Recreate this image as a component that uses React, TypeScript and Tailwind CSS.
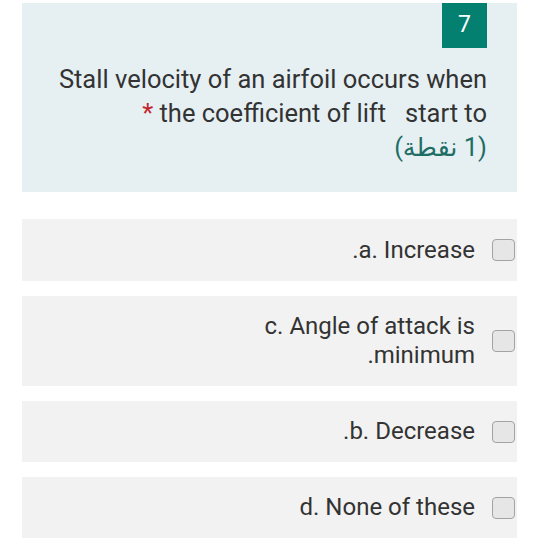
import React from "react";

function Checkbox() {
  return (
    <div className="w-[23px] h-[22px] shrink-0 rounded-[4px] border-[1.5px] border-[#a3a3a3] bg-[#e6e6e6]" />
  );
}

function Option({ lines, h }: { lines: string[]; h: string }) {
  return (
    <div className={`flex items-center justify-end gap-[17px] bg-[#f2f2f2] pr-[2px] ${h}`}>
      <div className="text-right text-[24px] leading-[29px] text-[#333333]">
        {lines.map((l, i) => (
          <div key={i}>{l}</div>
        ))}
      </div>
      <Checkbox />
    </div>
  );
}

export default function App() {
  return (
    <div
      className="w-[540px] h-[547px] bg-white pt-[3px] pl-[22px] pr-[23px] overflow-hidden"
      style={{ fontFamily: "Roboto, 'Noto Sans', sans-serif" }}
    >
      <div className="h-[189px] bg-[#e6f0f3] pr-[30px] flex flex-col items-end">
        <div className="w-[45px] h-[45px] bg-[#03806f] text-white text-[23px] flex items-center justify-center">
          7
        </div>
        <div className="mt-[14px] text-right text-[25.5px] leading-[34px] text-[#333333]">
          <div>Stall velocity of an airfoil occurs when</div>
          <div className="whitespace-pre">
            <span className="text-[#c4262e]">*</span> the coefficient of lift   start to
          </div>
          <div className="text-[#1f6e66]">
            <span dir="rtl" style={{ fontFamily: "Roboto, 'Noto Sans', 'DejaVu Sans', sans-serif" }}>
              (1 نقطة)
            </span>
          </div>
        </div>
      </div>
      <div className="mt-[27px] flex flex-col gap-[15px]">
        <Option lines={[".a. Increase"]} h="h-[62px]" />
        <Option lines={["c. Angle of attack is", ".minimum"]} h="h-[90px]" />
        <Option lines={[".b. Decrease"]} h="h-[61px]" />
        <Option lines={["d. None of these"]} h="h-[61px]" />
      </div>
    </div>
  );
}
